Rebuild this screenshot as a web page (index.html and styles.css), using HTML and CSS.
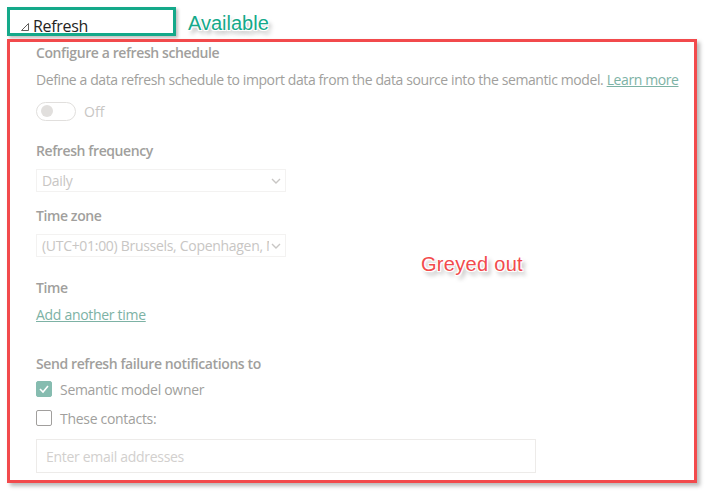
FILE: index.html
```html
<!DOCTYPE html>
<html>
<head>
<meta charset="utf-8">
<link rel="stylesheet" href="styles.css">
</head>
<body>
<div class="page">
  <div class="head">
    <div class="avail-box">
      <span class="tri"><svg width="8" height="8" viewBox="0 0 8 8"><path d="M7.5 0.5 L7.5 7.5 L0.5 7.5 Z" fill="none" stroke="#605e5c" stroke-width="1"/></svg></span>
      <span class="title">Refresh</span>
    </div>
    <span class="note note-green">Available</span>
  </div>
  <div class="grey-box">
    <div class="sec-title">Configure a refresh schedule</div>
    <div class="desc">Define a data refresh schedule to import data from the data source into the semantic model. <a class="link">Learn more</a></div>
    <div class="toggle-row">
      <span class="toggle"><span class="knob"></span></span>
      <span class="off">Off</span>
    </div>
    <div class="label lbl-freq">Refresh frequency</div>
    <div class="select"><span>Daily</span><svg class="chev" width="10" height="6" viewBox="0 0 10 6"><path d="M1 1 L5 5 L9 1" fill="none" stroke="#c8c6c4" stroke-width="1.4"/></svg></div>
    <div class="label lbl-tz">Time zone</div>
    <div class="select"><span class="clip">(UTC+01:00) Brussels, Copenhagen, Madrid, Paris</span><svg class="chev" width="10" height="6" viewBox="0 0 10 6"><path d="M1 1 L5 5 L9 1" fill="none" stroke="#c8c6c4" stroke-width="1.4"/></svg></div>
    <div class="label lbl-time">Time</div>
    <div class="add"><a class="link">Add another time</a></div>
    <div class="label lbl-send">Send refresh failure notifications to</div>
    <div class="check-row first">
      <span class="cb checked"><svg width="12" height="10" viewBox="0 0 12 10"><path d="M2 5 L5 8 L10 2" fill="none" stroke="#fff" stroke-width="1.6"/></svg></span>
      <span class="cb-text">Semantic model owner</span>
    </div>
    <div class="check-row">
      <span class="cb"></span>
      <span class="cb-text">These contacts:</span>
    </div>
    <div class="email">Enter email addresses</div>
    <span class="note note-red">Greyed out</span>
  </div>
</div>
</body>
</html>
```

FILE: styles.css
```css
html, body {
  margin: 0;
  padding: 0;
  background: #ffffff;
}
.page {
  width: 710px;
  height: 492px;
  padding: 7px 0 0 7px;
  box-sizing: border-box;
  font-family: "Open Sans", "Noto Sans", sans-serif;
}
.head {
  display: flex;
  align-items: flex-start;
  height: 29px;
}
.avail-box {
  width: 169px;
  height: 29px;
  box-sizing: border-box;
  border: 3px solid #14a98a;
  display: flex;
  align-items: center;
  padding: 9px 0 0 11px;
  box-shadow: 2px 2px 3px rgba(0,0,0,0.25);
}
.tri {
  display: inline-flex;
  width: 8px;
  height: 8px;
  margin-right: 4px;
  margin-top: 2px;
}
.title {
  font-size: 16px;
  line-height: 18px;
  color: #252423;
  letter-spacing: -0.3px;
}
.note {
  font-family: "Liberation Sans", Arial, sans-serif;
  font-size: 20px;
  line-height: 22px;
  text-shadow: 0 0 2px #fff, 0 0 2px #fff, 1px 1px 0 #fff, -1px -1px 0 #fff, 1px -1px 0 #fff, -1px 1px 0 #fff, 3px 4px 4px rgba(0,0,0,0.35);
}
.note-green {
  color: #14a98a;
  margin-left: 12px;
  margin-top: 5px;
}
.grey-box {
  position: relative;
  margin-top: 3px;
  width: 690px;
  height: 444px;
  box-sizing: border-box;
  border: 3px solid #f24a4c;
  box-shadow: 3px 3px 4px rgba(0,0,0,0.28);
  padding: 2px 0 0 26px;
  color: #a19f9d;
  font-size: 14px;
}
.sec-title {
  font-weight: 600;
  line-height: 18px;
  letter-spacing: -0.4px;
}
.desc {
  margin-top: 9px;
  line-height: 18px;
  letter-spacing: -0.4px;
  white-space: nowrap;
}
.link {
  color: #7db2a5;
  text-decoration: underline;
}
.toggle-row {
  display: flex;
  align-items: center;
  margin-top: 12px;
  height: 20px;
}
.toggle {
  width: 40px;
  height: 19px;
  box-sizing: border-box;
  border: 1px solid #e1dfdd;
  border-radius: 10px;
  display: flex;
  align-items: center;
  padding-left: 4px;
}
.knob {
  width: 12px;
  height: 12px;
  border-radius: 50%;
  background: #e1dfdd;
}
.off {
  margin-left: 8px;
  color: #c8c6c4;
}
.label {
  font-weight: 600;
  line-height: 18px;
  letter-spacing: -0.4px;
}
.lbl-freq { margin-top: 21px; }
.lbl-tz { margin-top: 15px; }
.lbl-time { margin-top: 22px; }
.lbl-send { margin-top: 31px; }
.select {
  margin-top: 9px;
  width: 250px;
  height: 23px;
  box-sizing: border-box;
  border: 1px solid #f3f2f1;
  display: flex;
  align-items: center;
  padding: 0 4px 0 5px;
  color: #c8c6c4;
}
.select span {
  flex: 1;
  white-space: nowrap;
  overflow: hidden;
  letter-spacing: -0.3px;
}
.chev { margin-left: 2px; }
.add {
  margin-top: 9px;
  line-height: 18px;
  letter-spacing: -0.3px;
}
.check-row {
  display: flex;
  align-items: center;
  height: 18px;
  margin-top: 11px;
}
.check-row.first { margin-top: 7px; }
.cb {
  width: 16px;
  height: 16px;
  box-sizing: border-box;
  border: 1px solid #a19f9d;
  border-radius: 2px;
  display: flex;
  align-items: center;
  justify-content: center;
}
.cb.checked {
  background: #86bcb0;
  border-color: #86bcb0;
}
.cb-text {
  margin-left: 8px;
  letter-spacing: -0.3px;
}
.email {
  margin-top: 12px;
  width: 500px;
  height: 34px;
  box-sizing: border-box;
  border: 1px solid #edebe9;
  display: flex;
  align-items: center;
  padding-left: 9px;
  color: #d2d0ce;
  letter-spacing: -0.3px;
}
.note-red {
  position: absolute;
  left: 411px;
  top: 211px;
  color: #f24a4c;
  letter-spacing: 0.3px;
}
```
